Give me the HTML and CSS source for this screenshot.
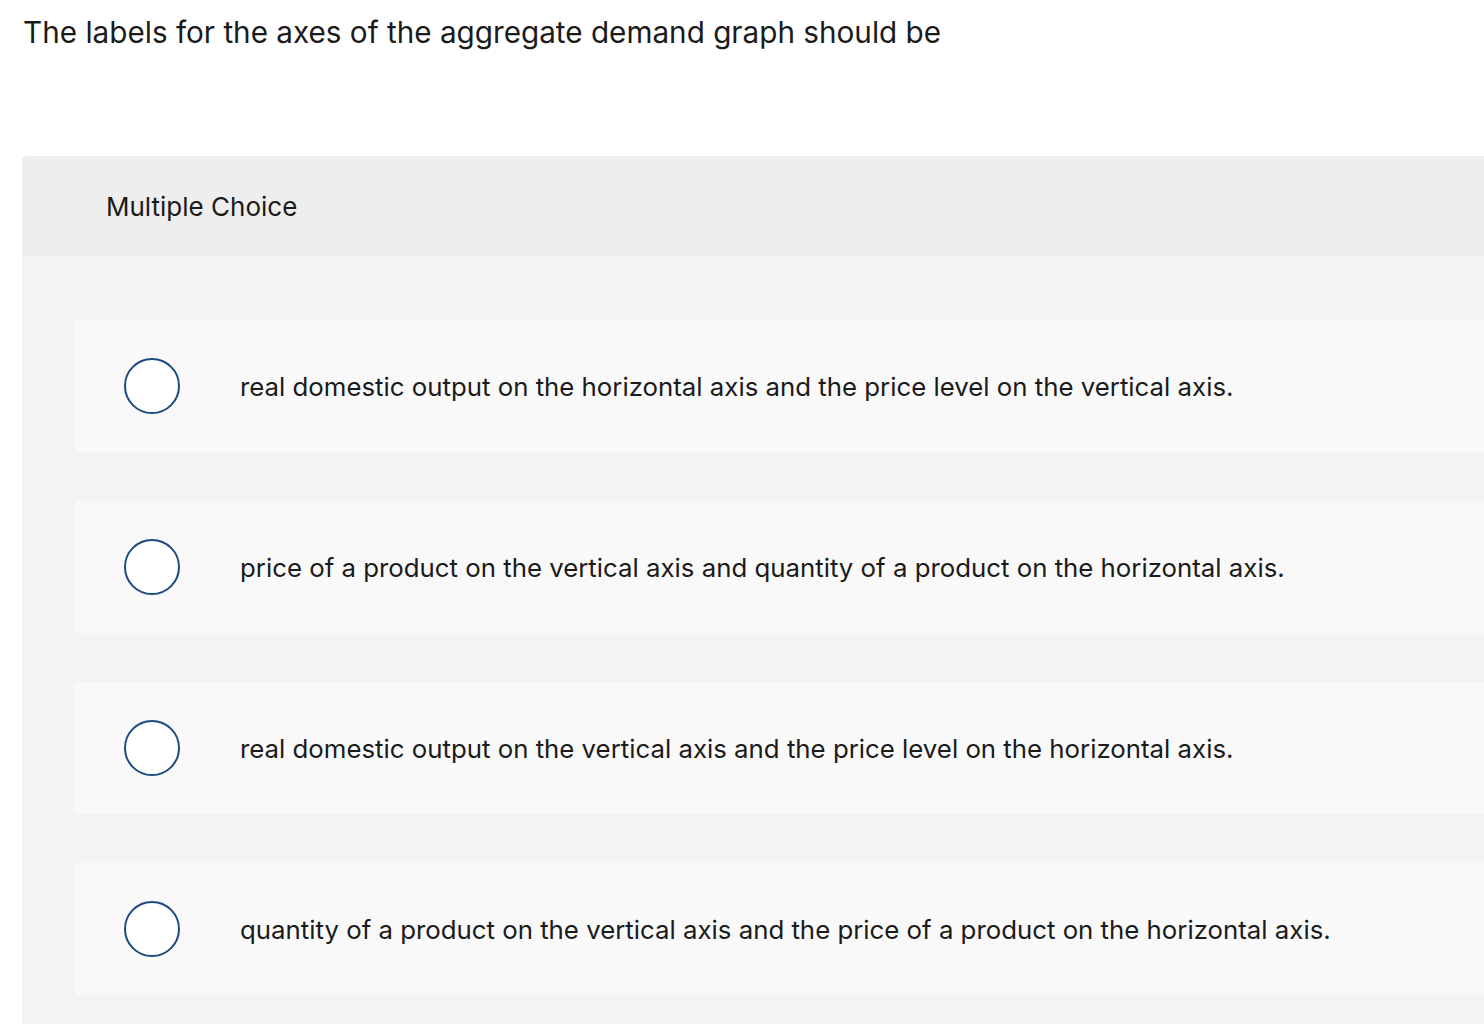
FILE: index.html
```html
<!DOCTYPE html>
<html>
<head>
<meta charset="utf-8">
<link rel="stylesheet" href="styles.css">
</head>
<body>
<div class="page">
  <h1 class="question">The labels for the axes of the aggregate demand graph should be</h1>
  <section class="panel">
    <header class="panel-head">Multiple Choice</header>
    <div class="options">
      <label class="option"><span class="radio"></span><span class="opt-text">real domestic output on the horizontal axis and the price level on the vertical axis.</span></label>
      <label class="option"><span class="radio"></span><span class="opt-text">price of a product on the vertical axis and quantity of a product on the horizontal axis.</span></label>
      <label class="option"><span class="radio"></span><span class="opt-text">real domestic output on the vertical axis and the price level on the horizontal axis.</span></label>
      <label class="option"><span class="radio"></span><span class="opt-text">quantity of a product on the vertical axis and the price of a product on the horizontal axis.</span></label>
    </div>
  </section>
</div>
</body>
</html>
```
FILE: styles.css
```css
html, body {
  margin: 0;
  padding: 0;
  background: #ffffff;
  overflow: hidden;
}
body {
  font-family: "Inter", "Lato", sans-serif;
  color: #1b1b1b;
}
.page {
  padding: 14px 0 0 22px;
}
.question {
  margin: 0 0 0 1px;
  font-size: 29.7px;
  font-weight: 400;
  line-height: 36px;
  height: 142px;
}
.panel {
  background: #f3f3f3;
  border-top-left-radius: 5px;
  margin-right: -20px;
  min-height: 900px;
}
.panel-head {
  background: #eeeeee;
  border-top-left-radius: 5px;
  height: 100px;
  padding-left: 84px;
  font-size: 26px;
  line-height: 101px;
}
.options {
  display: flex;
  flex-direction: column;
  gap: 49px;
  padding: 64px 0 0 52px;
}
.option {
  display: flex;
  align-items: center;
  height: 132px;
  background: #f9f9f9;
  border-radius: 5px 0 0 5px;
}
.radio {
  flex: none;
  box-sizing: border-box;
  width: 56px;
  height: 56px;
  margin-left: 50px;
  margin-right: 60px;
  border: 2px solid #1d4a80;
  border-radius: 50%;
  background: #ffffff;
}
.opt-text {
  font-size: 25.8px;
}
```
